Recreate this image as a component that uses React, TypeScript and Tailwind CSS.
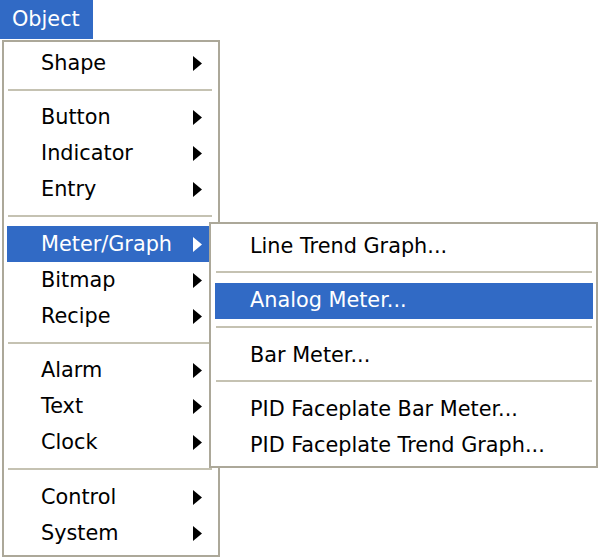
import React from 'react';

const mainItems: (string | null)[] = [
  'Shape',
  null,
  'Button',
  'Indicator',
  'Entry',
  null,
  'Meter/Graph',
  'Bitmap',
  'Recipe',
  null,
  'Alarm',
  'Text',
  'Clock',
  null,
  'Control',
  'System',
];

const subItems: (string | null)[] = [
  'Line Trend Graph...',
  null,
  'Analog Meter...',
  null,
  'Bar Meter...',
  null,
  'PID Faceplate Bar Meter...',
  'PID Faceplate Trend Graph...',
];

function Arrow({ white }: { white: boolean }) {
  return (
    <svg width="9" height="15" viewBox="0 0 9 15" className="shrink-0">
      <polygon points="0,0 9,7.5 0,15" fill={white ? '#ffffff' : '#000000'} />
    </svg>
  );
}

export default function App() {
  return (
    <div className="relative w-[600px] h-[558px] overflow-hidden bg-white font-['DejaVu_Sans',sans-serif] text-[20.8px]">
      <div className="flex h-[39px] w-[93px] items-center bg-[#316ac5] pl-[12px] text-white">
        Object
      </div>
      <div className="ml-[2px] mt-[1px] w-[218px] border-2 border-[#aca899] bg-white px-[3px] pt-[3px] pb-[4px]">
        {mainItems.map((it, i) =>
          it === null ? (
            <div key={i} className="h-[18.5px] pt-[7.5px] ml-[1px] mr-[3px]">
              <div className="h-[2px] bg-[#c5c2b2]" />
            </div>
          ) : (
            <div
              key={i}
              className={
                it === 'Meter/Graph'
                  ? 'flex h-[36px] items-center pl-[34px] pr-[13px] bg-[#316ac5] text-white'
                  : 'flex h-[36px] items-center pl-[34px] pr-[13px] text-black'
              }
            >
              <span className="flex-1 whitespace-nowrap pt-[1px]">{it}</span>
              <Arrow white={it === 'Meter/Graph'} />
            </div>
          )
        )}
      </div>
      <div className="absolute left-[209px] top-[222px] w-[389px] border-2 border-[#aca899] bg-white pl-[4px] pr-[3px] pt-[4px] pb-[2px]">
        {subItems.map((it, i) =>
          it === null ? (
            <div key={i} className="h-[18.5px] pt-[7px] mx-[1px]">
              <div className="h-[2px] bg-[#c5c2b2]" />
            </div>
          ) : (
            <div
              key={i}
              className={
                it === 'Analog Meter...'
                  ? 'flex h-[36px] items-center pl-[35px] bg-[#316ac5] text-white'
                  : 'flex h-[36px] items-center pl-[35px] text-black'
              }
            >
              <span className="whitespace-nowrap pt-[1px]">{it}</span>
            </div>
          )
        )}
      </div>
    </div>
  );
}
